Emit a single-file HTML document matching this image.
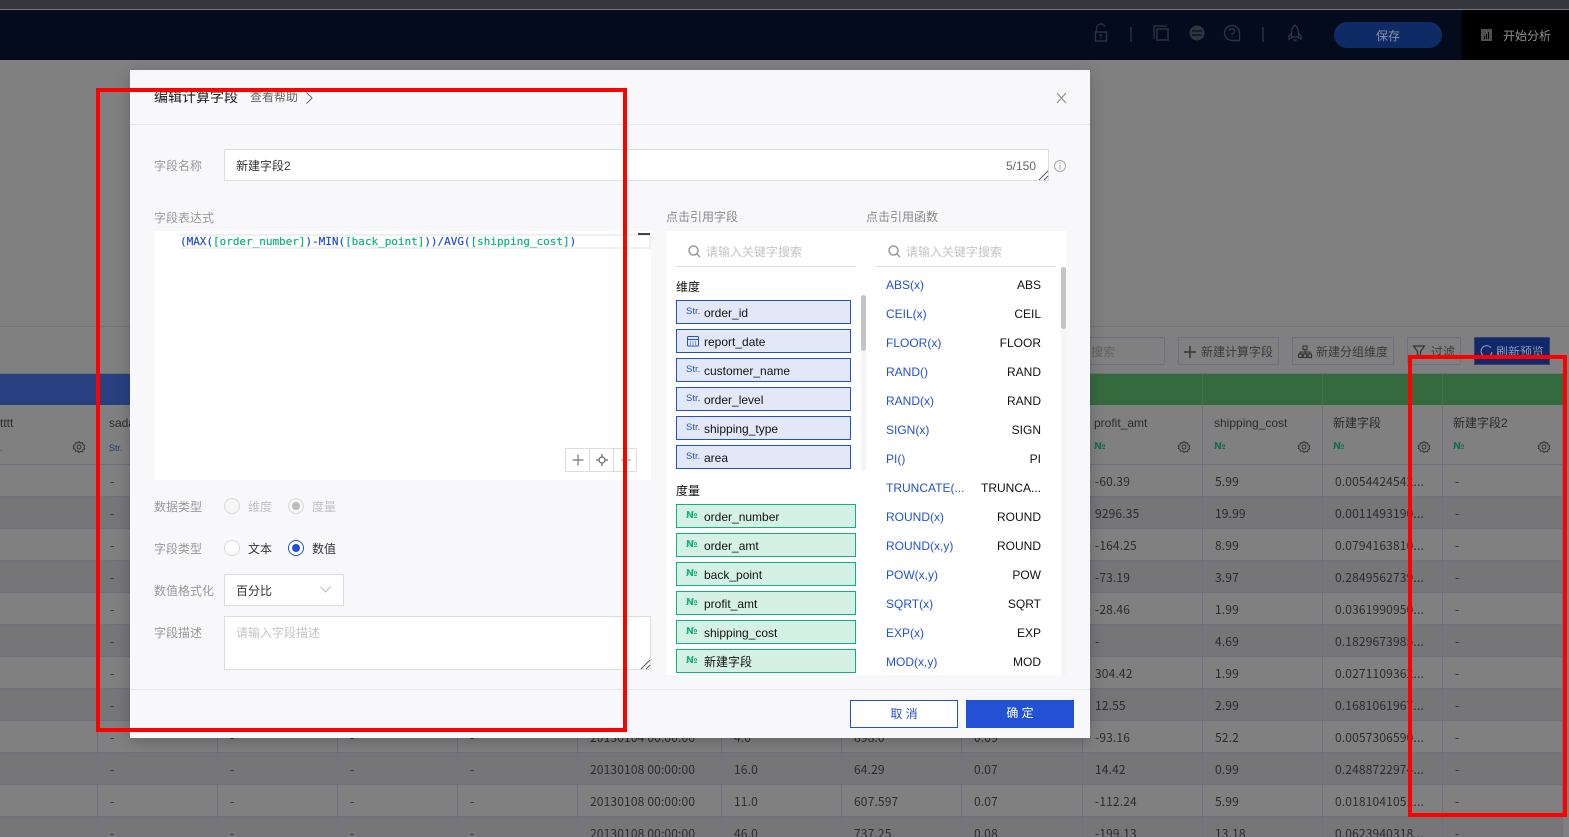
<!DOCTYPE html>
<html lang="zh">
<head>
<meta charset="utf-8">
<title>编辑计算字段</title>
<style>
html,body{margin:0;padding:0;width:1569px;height:837px;overflow:hidden;background:#808080;font-family:"Liberation Sans","Noto Sans CJK SC",sans-serif;font-size:12px;color:#333}
#root{position:absolute;left:0;top:0;width:1569px;height:837px;overflow:hidden;background:#808080}
.a{position:absolute}
.t{position:absolute;white-space:nowrap;line-height:16px;height:16px}
.g{color:#999}
svg{position:absolute;overflow:visible}
table{position:absolute;left:-23px;top:465px;border-collapse:collapse;table-layout:fixed;width:1585px;font-family:"Noto Sans CJK SC","Liberation Sans",sans-serif;color:#2b2b2b;letter-spacing:.15px}
td{height:29px;padding:2px 0 0 12px;border:1px solid #6e7180;border-top:0;white-space:nowrap;overflow:hidden;box-sizing:content-box;line-height:16px}
tr:nth-child(even) td{background:#767679}
tr:nth-child(odd) td{background:#808080}
.hc{position:absolute;top:405px;height:59px;border-right:1px solid #6e7180;box-sizing:border-box}
.tb{position:absolute;top:337px;height:28px;border:1px solid #6e7180;box-sizing:border-box}
.dim{position:absolute;width:175px;height:24px;left:676px;box-sizing:border-box;border:1px solid #2251d4;background:#e2e8f8;color:#111;line-height:25px;padding-left:27px;white-space:nowrap}
.mea{position:absolute;width:180px;height:24px;left:676px;box-sizing:border-box;border:1px solid #12b07c;background:#d5f1e6;color:#111;line-height:25px;padding-left:27px;white-space:nowrap}
.s{position:absolute;left:9px;top:0;font-size:9.500px;line-height:22px;color:#2251d4}
.n{position:absolute;left:9px;top:0;font-family:"DejaVu Sans",sans-serif;font-size:9.500px;font-weight:bold;line-height:22px;color:#12b07c}
.hn{font-family:"DejaVu Sans",sans-serif;font-size:9.500px;font-weight:bold;color:#156e52}
.fl{position:absolute;left:886px;color:#2251d4;line-height:16px;white-space:nowrap}
.fr{position:absolute;right:528px;color:#111;line-height:16px;white-space:nowrap}
.radio{position:absolute;width:16px;height:16px;border-radius:50%;border:1px solid #d9d9d9;background:#fff;box-sizing:border-box}
.red{position:absolute;border:4.5px solid #f00;box-sizing:border-box;z-index:50}
</style>
</head>
<body>
<div id="root">
<!-- top bars -->
<div class="a" style="left:0;top:0;width:1569px;height:9px;background:#36373c"></div>
<div class="a" style="left:0;top:9px;width:1569px;height:1px;background:#77777a"></div>
<div class="a" style="left:0;top:10px;width:1569px;height:50px;background:#040b1d"></div>
<div class="a" style="left:1462px;top:10px;width:107px;height:50px;background:#000"></div>

<svg style="left:1085px;top:15px" width="240" height="40" fill="none" stroke="#2e323f" stroke-width="1.4">
  <rect x="10.5" y="17" width="11" height="9"/><path d="M11.500 17v-4a4.500 4.500 0 0 1 8.500-1.500"/><path d="M16 24v-4M14.500 21l1.500-1.500 1.500 1.500" stroke-width="1"/>
  <path d="M46 12v15" stroke-width="1.400"/>
  <path d="M69 24v-13h13"/><rect x="72" y="14" width="11" height="11" stroke-width="1.500"/>
  <circle cx="112" cy="18" r="7.500" fill="#30343f" stroke="none"/><path d="M107 16h10M107 20h10" stroke="#040b1d" stroke-width="1.300"/>
  <path d="M147 10.500a7.500 7.500 0 1 0 0 15h7.500v-7.500a7.500 7.500 0 0 0-7.500-7.500z"/><path d="M144.500 16a2.500 2.500 0 1 1 3.500 2.300c-.8.400-1 .9-1 1.700M147 21.500v1"/>
  <path d="M178 12v15" stroke-width="1.400"/>
  <path d="M210 10c2.500 2 3.500 5 3.500 8v4h-7v-4c0-3 1-6 3.500-8zM206.500 18l-2.500 3v3l3-1.500M213.500 18l2.500 3v3l-3-1.500M208.500 24.500l1.500 1.500 1.500-1.500"/>
</svg>
<div class="a" style="left:1334px;top:22px;width:108px;height:26px;border-radius:13px;background:#0f2b66"></div>
<div class="t" style="left:1376px;top:28px;color:#8b93a7">保存</div>
<div class="a" style="left:1481px;top:29px;width:11px;height:12px;background:#4f4f4f"></div>
<svg style="left:1481px;top:29px" width="11" height="12" stroke="#000" stroke-width="1"><path d="M3.500 10V7M5.500 10V5M7.500 10V3"/></svg>
<div class="t" style="left:1503px;top:28px;color:#8f8f8f">开始分析</div>

<!-- toolbar -->
<div class="a" style="left:0;top:326px;width:1569px;height:1px;background:#747477"></div>
<div class="tb" style="left:1061px;width:104px"></div>
<div class="t" style="left:1091px;top:344px;color:#626262">搜索</div>
<div class="tb" style="left:1178px;width:101px"></div>
<svg style="left:1183px;top:345px" width="14" height="14" stroke="#333" stroke-width="1.500"><path d="M7 1v12M1 7h12"/></svg>
<div class="t" style="left:1201px;top:344px;color:#3a3a3a">新建计算字段</div>
<div class="tb" style="left:1292px;width:102px"></div>
<svg style="left:1298px;top:345px" width="14" height="14" fill="none" stroke="#333" stroke-width="1.100"><rect x="5" y="1" width="4" height="3.500"/><rect x="0.500" y="9" width="3.500" height="3.500"/><rect x="5.200" y="9" width="3.500" height="3.500"/><rect x="10" y="9" width="3.500" height="3.500"/><path d="M7 4.500V9M2.200 9V7h9.600v2"/></svg>
<div class="t" style="left:1316px;top:344px;color:#3a3a3a">新建分组维度</div>
<div class="tb" style="left:1407px;width:54px"></div>
<svg style="left:1413px;top:345px" width="13" height="14" fill="none" stroke="#333" stroke-width="1.200"><path d="M0.500 1h11L7.500 6.500V13l-3-1.500v-5z"/></svg>
<div class="t" style="left:1431px;top:344px;color:#3a3a3a">过滤</div>
<div class="tb" style="left:1474px;width:76px;background:#11296a;border-color:#34446e"></div>
<svg style="left:1480px;top:345px" width="13" height="13" fill="none" stroke="#8b97b8" stroke-width="1.100"><path d="M11 3a5.500 5.500 0 1 0 1 4"/></svg>
<div class="t" style="left:1496px;top:344px;color:#8b97b8">刷新预览</div>

<!-- table colored headers -->
<div class="a" style="left:0;top:374px;width:1089px;height:31px;background:#284080"></div>
<div class="a" style="left:1000px;top:374px;width:563px;height:31px;background:#356a3f"></div>
<div class="a" style="left:1202px;top:374px;width:1px;height:31px;background:#417549"></div>
<div class="a" style="left:1322px;top:374px;width:1px;height:31px;background:#417549"></div>
<div class="a" style="left:1442px;top:374px;width:1px;height:31px;background:#417549"></div>
<div class="a" style="left:0;top:373px;width:1563px;height:1px;background:#6e7078"></div>

<div class="hc" style="left:0;width:97px"></div>
<div class="hc" style="left:97px;width:120px"></div>
<div class="hc" style="left:1083px;width:120px"></div>
<div class="hc" style="left:1203px;width:120px"></div>
<div class="hc" style="left:1323px;width:120px"></div>
<div class="hc" style="left:1443px;width:120px"></div>
<div class="a" style="left:0;top:464px;width:1563px;height:1px;background:#6e7180"></div>

<div class="t" style="left:0;top:415px;color:#2b2b2b">tttt</div>
<div class="t" style="left:0;top:440px;font-size:9px;color:#1d3580">.</div>
<div class="t" style="left:109px;top:415px;color:#2b2b2b">sada</div>
<div class="t" style="left:109px;top:440px;font-size:9px;color:#1d3580">Str.</div>
<div class="t" style="left:1094px;top:415px;color:#2b2b2b">profit_amt</div>
<div class="t hn" style="left:1094px;top:439px">№</div>
<div class="t" style="left:1214px;top:415px;color:#2b2b2b">shipping_cost</div>
<div class="t hn" style="left:1214px;top:439px">№</div>
<div class="t" style="left:1333px;top:415px;color:#2b2b2b">新建字段</div>
<div class="t hn" style="left:1333px;top:439px">№</div>
<div class="t" style="left:1453px;top:415px;color:#2b2b2b">新建字段2</div>
<div class="t hn" style="left:1453px;top:439px">№</div>

<svg style="left:73px;top:441px" width="12" height="12" fill="none" stroke="#333" stroke-width="1"><path d="M6 .5l1.300 1.600 2-.4.700 1.900 1.700 1.100L11 6.500l.7 1.300-1.700 1.100-.7 1.900-2-.4L6 11.500l-1.300-1.600-2 .4-.7-1.900L.3 7.300 1 6 .3 4.700 2 3.600l.7-1.900 2 .4z"/><circle cx="6" cy="6" r="2"/></svg>
<svg style="left:1178px;top:441px" width="12" height="12" fill="none" stroke="#333" stroke-width="1"><path d="M6 .5l1.300 1.600 2-.4.700 1.900 1.700 1.100L11 6.500l.7 1.300-1.700 1.100-.7 1.900-2-.4L6 11.500l-1.300-1.600-2 .4-.7-1.900L.3 7.300 1 6 .3 4.700 2 3.600l.7-1.900 2 .4z"/><circle cx="6" cy="6" r="2"/></svg>
<svg style="left:1298px;top:441px" width="12" height="12" fill="none" stroke="#333" stroke-width="1"><path d="M6 .5l1.300 1.600 2-.4.700 1.900 1.700 1.100L11 6.500l.7 1.300-1.700 1.100-.7 1.900-2-.4L6 11.500l-1.300-1.600-2 .4-.7-1.900L.3 7.300 1 6 .3 4.700 2 3.600l.7-1.900 2 .4z"/><circle cx="6" cy="6" r="2"/></svg>
<svg style="left:1418px;top:441px" width="12" height="12" fill="none" stroke="#333" stroke-width="1"><path d="M6 .5l1.300 1.600 2-.4.700 1.900 1.700 1.100L11 6.500l.7 1.300-1.700 1.100-.7 1.900-2-.4L6 11.500l-1.300-1.600-2 .4-.7-1.900L.3 7.300 1 6 .3 4.700 2 3.600l.7-1.900 2 .4z"/><circle cx="6" cy="6" r="2"/></svg>
<svg style="left:1538px;top:441px" width="12" height="12" fill="none" stroke="#333" stroke-width="1"><path d="M6 .5l1.300 1.600 2-.4.700 1.900 1.700 1.100L11 6.500l.7 1.300-1.700 1.100-.7 1.900-2-.4L6 11.500l-1.300-1.600-2 .4-.7-1.900L.3 7.300 1 6 .3 4.700 2 3.600l.7-1.900 2 .4z"/><circle cx="6" cy="6" r="2"/></svg>

<table>
<colgroup><col style="width:120px"><col style="width:120px"><col style="width:120px"><col style="width:120px"><col style="width:120px"><col style="width:144px"><col style="width:120px"><col style="width:120px"><col style="width:121px"><col style="width:120px"><col style="width:120px"><col style="width:120px"><col style="width:120px"></colgroup>
<tr><td></td><td>-</td><td></td><td></td><td></td><td></td><td></td><td></td><td></td><td>-60.39</td><td>5.99</td><td>0.0054424542...</td><td>-</td></tr>
<tr><td></td><td>-</td><td></td><td></td><td></td><td></td><td></td><td></td><td></td><td>9296.35</td><td>19.99</td><td>0.0011493190...</td><td>-</td></tr>
<tr><td></td><td>-</td><td></td><td></td><td></td><td></td><td></td><td></td><td></td><td>-164.25</td><td>8.99</td><td>0.0794163810...</td><td>-</td></tr>
<tr><td></td><td>-</td><td></td><td></td><td></td><td></td><td></td><td></td><td></td><td>-73.19</td><td>3.97</td><td>0.2849562739...</td><td>-</td></tr>
<tr><td></td><td>-</td><td></td><td></td><td></td><td></td><td></td><td></td><td></td><td>-28.46</td><td>1.99</td><td>0.0361990950...</td><td>-</td></tr>
<tr><td></td><td>-</td><td></td><td></td><td></td><td></td><td></td><td></td><td></td><td>-</td><td>4.69</td><td>0.1829673985...</td><td>-</td></tr>
<tr><td></td><td>-</td><td></td><td></td><td></td><td></td><td></td><td></td><td></td><td>304.42</td><td>1.99</td><td>0.0271109362...</td><td>-</td></tr>
<tr><td></td><td>-</td><td></td><td></td><td></td><td></td><td></td><td></td><td></td><td>12.55</td><td>2.99</td><td>0.1681061967...</td><td>-</td></tr>
<tr><td></td><td>-</td><td>-</td><td>-</td><td>-</td><td>20130104 00:00:00</td><td>4.0</td><td>898.0</td><td>0.09</td><td>-93.16</td><td>52.2</td><td>0.0057306590...</td><td>-</td></tr>
<tr><td></td><td>-</td><td>-</td><td>-</td><td>-</td><td>20130108 00:00:00</td><td>16.0</td><td>64.29</td><td>0.07</td><td>14.42</td><td>0.99</td><td>0.2488722974...</td><td>-</td></tr>
<tr><td></td><td>-</td><td>-</td><td>-</td><td>-</td><td>20130108 00:00:00</td><td>11.0</td><td>607.597</td><td>0.07</td><td>-112.24</td><td>5.99</td><td>0.0181041051...</td><td>-</td></tr>
<tr><td></td><td>-</td><td>-</td><td>-</td><td>-</td><td>20130108 00:00:00</td><td>46.0</td><td>737.25</td><td>0.08</td><td>-199.13</td><td>13.18</td><td>0.0623940318...</td><td>-</td></tr>
</table>

<!-- modal -->
<div class="a" style="left:130px;top:70px;width:960px;height:668px;background:#f8f8fb;box-shadow:0 4px 14px rgba(0,0,0,.22)"></div>
<div class="a" style="left:130px;top:124px;width:960px;height:1px;background:#e6e7ea"></div>
<div class="a" style="left:130px;top:689px;width:960px;height:1px;background:#e6e7ea"></div>

<div class="t" style="left:154px;top:89px;font-size:14px;color:#222">编辑计算字段</div>
<div class="t" style="left:250px;top:89px;color:#666">查看帮助</div>
<svg style="left:305px;top:92px" width="9" height="12" fill="none" stroke="#666" stroke-width="1"><path d="M1.500 .5l5.500 5.500-5.500 5.500"/></svg>
<svg style="left:1056px;top:92px" width="11" height="12" fill="none" stroke="#888" stroke-width="1"><path d="M1 1l9 10M10 1L1 11"/></svg>

<!-- field name -->
<div class="t g" style="left:154px;top:158px">字段名称</div>
<div class="a" style="left:224px;top:149px;width:825px;height:32px;box-sizing:border-box;background:#fff;border:1px solid #ddd"></div>
<div class="t" style="left:236px;top:158px;color:#333">新建字段2</div>
<div class="t" style="left:1006px;top:158px;color:#666">5/150</div>
<svg style="left:1039px;top:171px" width="9" height="9" stroke="#555" stroke-width="1"><path d="M0 9l9-9M5 9l4-4"/></svg>
<svg style="left:1054px;top:160px" width="12" height="12" fill="none" stroke="#a6a6a6" stroke-width="1"><circle cx="6" cy="6" r="5.500"/><path d="M6 5v4.500M6 2.500v1.300"/></svg>

<!-- expression -->
<div class="t g" style="left:154px;top:210px">字段表达式</div>
<div class="a" style="left:154px;top:231px;width:497px;height:249px;background:#fff"></div>
<div class="a" style="left:180px;top:234px;width:471px;height:15px;box-sizing:border-box;border:2px solid #efefef;border-left:0"></div>
<div class="a" style="left:638px;top:233px;width:12px;height:1.500px;background:#444"></div>
<div class="t" style="left:180px;top:234px;font-family:'DejaVu Sans Mono',monospace;font-size:11px;letter-spacing:-.02px;-webkit-text-stroke:.2px;color:#2251d4">(MAX(<span style="color:#0fb37f">[order_number]</span>)-MIN(<span style="color:#0fb37f">[back_point]</span>))/AVG(<span style="color:#0fb37f">[shipping_cost]</span>)</div>
<div class="a" style="left:565px;top:448px;width:72px;height:24px;box-sizing:border-box;border:1px solid #ddd;border-radius:2px;background:#fff"></div>
<div class="a" style="left:589px;top:448px;width:1px;height:24px;background:#ddd"></div>
<div class="a" style="left:613px;top:448px;width:1px;height:24px;background:#ddd"></div>
<svg style="left:572px;top:454px" width="12" height="12" stroke="#777" stroke-width="1.200"><path d="M6 .5v11M.5 6h11"/></svg>
<svg style="left:596px;top:454px" width="12" height="12" fill="none" stroke="#666" stroke-width="1.200"><circle cx="6" cy="6" r="3"/><path d="M6 0v3M6 9v3M0 6h3M9 6h3"/></svg>
<svg style="left:620px;top:454px" width="12" height="12" stroke="#aaa" stroke-width="1.200"><path d="M1 6h10"/></svg>

<!-- radios -->
<div class="t g" style="left:154px;top:499px">数据类型</div>
<div class="radio" style="left:224px;top:498px;background:#f5f5f5"></div>
<div class="t" style="left:248px;top:499px;color:#c2c2c2">维度</div>
<div class="radio" style="left:288px;top:498px;background:#f5f5f5"></div>
<div class="a" style="left:292px;top:502px;width:8px;height:8px;border-radius:50%;background:#bdbdbd"></div>
<div class="t" style="left:312px;top:499px;color:#c2c2c2">度量</div>

<div class="t g" style="left:154px;top:541px">字段类型</div>
<div class="radio" style="left:224px;top:540px"></div>
<div class="t" style="left:248px;top:541px;color:#333">文本</div>
<div class="radio" style="left:288px;top:540px;border-color:#2251d4"></div>
<div class="a" style="left:292px;top:544px;width:8px;height:8px;border-radius:50%;background:#2251d4"></div>
<div class="t" style="left:312px;top:541px;color:#333">数值</div>

<div class="t g" style="left:154px;top:583px">数值格式化</div>
<div class="a" style="left:224px;top:574px;width:120px;height:32px;box-sizing:border-box;background:#fff;border:1px solid #ddd"></div>
<div class="t" style="left:236px;top:583px;color:#333">百分比</div>
<svg style="left:320px;top:586px" width="11" height="7" fill="none" stroke="#bbb" stroke-width="1"><path d="M.5 .5l5 5.500 5-5.500"/></svg>

<div class="t g" style="left:154px;top:625px">字段描述</div>
<div class="a" style="left:224px;top:616px;width:427px;height:54px;box-sizing:border-box;background:#fff;border:1px solid #ddd"></div>
<div class="t" style="left:236px;top:625px;color:#c4c4c4">请输入字段描述</div>
<svg style="left:641px;top:660px" width="9" height="9" stroke="#555" stroke-width="1"><path d="M0 9l9-9M5 9l4-4"/></svg>

<!-- right panels -->
<div class="t g" style="left:666px;top:209px;color:#888">点击引用字段</div>
<div class="t g" style="left:866px;top:209px;color:#888">点击引用函数</div>
<div class="a" style="left:666px;top:231px;width:400px;height:444px;background:#fff"></div>

<svg style="left:688px;top:245px" width="13" height="13" fill="none" stroke="#999" stroke-width="1.500"><circle cx="5.500" cy="5.500" r="4.500"/><path d="M9 9l3 3"/></svg>
<div class="t" style="left:706px;top:244px;color:#c4c4c4">请输入关键字搜索</div>
<div class="a" style="left:676px;top:266px;width:180px;height:1px;background:#dedede"></div>
<svg style="left:888px;top:245px" width="13" height="13" fill="none" stroke="#999" stroke-width="1.500"><circle cx="5.500" cy="5.500" r="4.500"/><path d="M9 9l3 3"/></svg>
<div class="t" style="left:906px;top:244px;color:#c4c4c4">请输入关键字搜索</div>
<div class="a" style="left:876px;top:266px;width:180px;height:1px;background:#dedede"></div>

<div class="a" style="left:861px;top:295px;width:5px;height:176px;background:#f5f5f5;border-radius:3px"></div>
<div class="a" style="left:861px;top:295px;width:5px;height:56px;background:#c4c4c4;border-radius:3px"></div>
<div class="a" style="left:1061px;top:267px;width:5px;height:408px;background:#f5f5f5"></div>
<div class="a" style="left:1061px;top:267px;width:5px;height:62px;background:#c4c4c4;border-radius:3px"></div>

<div class="t" style="left:676px;top:279px;color:#111">维度</div>
<div class="dim" style="top:300px"><span class="s">Str.</span>order_id</div>
<div class="dim" style="top:329px"><svg style="left:10px;top:5px" width="13" height="12" fill="none" stroke="#2251d4" stroke-width="1"><rect x=".5" y="1.500" width="11" height="9.500" rx="1"/><path d="M.5 4.500h11M3 7h1M5.500 7h1M8 7h1M3 9h1M5.500 9h1M8 9h1"/></svg>report_date</div>
<div class="dim" style="top:358px"><span class="s">Str.</span>customer_name</div>
<div class="dim" style="top:387px"><span class="s">Str.</span>order_level</div>
<div class="dim" style="top:416px"><span class="s">Str.</span>shipping_type</div>
<div class="dim" style="top:445px"><span class="s">Str.</span>area</div>

<div class="t" style="left:676px;top:483px;color:#111">度量</div>
<div class="mea" style="top:504px"><span class="n">№</span>order_number</div>
<div class="mea" style="top:533px"><span class="n">№</span>order_amt</div>
<div class="mea" style="top:562px"><span class="n">№</span>back_point</div>
<div class="mea" style="top:591px"><span class="n">№</span>profit_amt</div>
<div class="mea" style="top:620px"><span class="n">№</span>shipping_cost</div>
<div class="mea" style="top:649px"><span class="n">№</span>新建字段</div>

<div class="fl" style="top:277px">ABS(x)</div><div class="fr" style="top:277px">ABS</div>
<div class="fl" style="top:306px">CEIL(x)</div><div class="fr" style="top:306px">CEIL</div>
<div class="fl" style="top:335px">FLOOR(x)</div><div class="fr" style="top:335px">FLOOR</div>
<div class="fl" style="top:364px">RAND()</div><div class="fr" style="top:364px">RAND</div>
<div class="fl" style="top:393px">RAND(x)</div><div class="fr" style="top:393px">RAND</div>
<div class="fl" style="top:422px">SIGN(x)</div><div class="fr" style="top:422px">SIGN</div>
<div class="fl" style="top:451px">PI()</div><div class="fr" style="top:451px">PI</div>
<div class="fl" style="top:480px">TRUNCATE(...</div><div class="fr" style="top:480px">TRUNCA...</div>
<div class="fl" style="top:509px">ROUND(x)</div><div class="fr" style="top:509px">ROUND</div>
<div class="fl" style="top:538px">ROUND(x,y)</div><div class="fr" style="top:538px">ROUND</div>
<div class="fl" style="top:567px">POW(x,y)</div><div class="fr" style="top:567px">POW</div>
<div class="fl" style="top:596px">SQRT(x)</div><div class="fr" style="top:596px">SQRT</div>
<div class="fl" style="top:625px">EXP(x)</div><div class="fr" style="top:625px">EXP</div>
<div class="fl" style="top:654px">MOD(x,y)</div><div class="fr" style="top:654px">MOD</div>

<!-- footer buttons -->
<div class="a" style="left:850px;top:700px;width:108px;height:28px;box-sizing:border-box;background:#fff;border:1px solid #2251d4;color:#2251d4;text-align:center;line-height:26px">取 消</div>
<div class="a" style="left:966px;top:700px;width:108px;height:28px;box-sizing:border-box;background:#2251d4;color:#fff;text-align:center;line-height:26px">确 定</div>

<!-- annotations -->
<div class="red" style="left:96px;top:88px;width:531px;height:643.500px"></div>
<div class="red" style="left:1408px;top:355px;width:159px;height:462px"></div>
</div>
</body>
</html>
